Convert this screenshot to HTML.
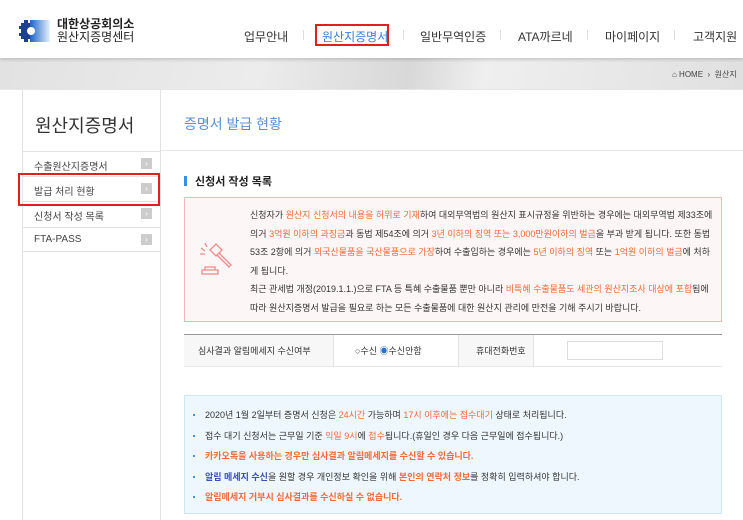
<!DOCTYPE html>
<html><head><meta charset="utf-8"><style>
*{margin:0;padding:0;box-sizing:border-box}
body{width:743px;height:520px;overflow:hidden;background:#fff;font-family:"Liberation Sans","Noto Sans CJK KR",sans-serif;color:#333;position:relative}
.a{position:absolute}
.o{color:#f26b3a}
.nav span{position:absolute;top:28px;font-size:12px;color:#333}
.sep{position:absolute;top:30px;width:1px;height:10px;background:#ddd}
.menu div{position:absolute;left:22px;width:138px;height:25px;border-top:1px solid #e2e2e2;font-size:10px;color:#444;padding:6px 0 0 12px}
.menu i{position:absolute;right:8px;top:6px;width:11px;height:11px;background:#ccc;color:#fff;font-size:8px;font-style:normal;line-height:11px;text-align:center}
.pk{font-size:9px;line-height:18.5px;color:#333}
.bl li{list-style:none;font-size:9px;line-height:20.5px;position:relative;padding-left:14px}
.bl li:before{content:"";position:absolute;left:2px;top:9px;width:2px;height:2px;background:#4a90d9}
</style></head><body>
<div class="a" style="left:0;top:0;width:743px;height:58px;background:#fff;box-shadow:0 2px 3px rgba(0,0,0,.15);z-index:2">
 <svg class="a" style="left:18px;top:18px" width="34" height="26" viewBox="0 0 34 26"><path d="M6 2h4v3h3v16h-3v3H6v-3H3v-3H1v-3h2v-4H1V8h2V5h3z" fill="#1d3f8f"/><rect x="12" y="2" width="20" height="22" fill="url(#g)"/><defs><linearGradient id="g"><stop offset="0" stop-color="#1a62c8"/><stop offset="1" stop-color="#e8f2fc"/></linearGradient></defs><circle cx="13" cy="13" r="4" fill="#fff"/></svg>
 <div class="a" style="left:57px;top:18px;font-size:12px;font-weight:bold;color:#222;line-height:13px">대한상공회의소</div>
 <div class="a" style="left:57px;top:31px;font-size:12px;color:#222;line-height:13px">원산지증명센터</div>
 <div class="nav">
  <span style="left:244px">업무안내</span><div class="sep" style="left:303px"></div>
  <span style="left:322px;color:#3a7bd5">원산지증명서</span>
  <div class="a" style="left:315px;top:24px;width:74px;height:22px;border:2px solid #e02020"></div>
  <div class="sep" style="left:403px"></div>
  <span style="left:420px">일반무역인증</span><div class="sep" style="left:500px"></div>
  <span style="left:518px">ATA까르네</span><div class="sep" style="left:587px"></div>
  <span style="left:605px">마이페이지</span><div class="sep" style="left:674px"></div>
  <span style="left:693px">고객지원</span>
 </div>
</div>
<div class="a" style="left:0;top:58px;width:743px;height:32px;background:linear-gradient(100deg,#e2e2e2 0%,#ececec 35%,#d8d8d8 55%,#efefef 65%,#e0e0e0 100%);border-bottom:1px solid #e6e6e6"></div>
<div class="a" style="left:672px;top:69px;font-size:8px;color:#444">⌂ HOME &nbsp;› &nbsp;원산지</div>
<div class="a" style="left:22px;top:90px;width:1px;height:430px;background:#e2e2e2"></div>
<div class="a" style="left:160px;top:90px;width:1px;height:430px;background:#e2e2e2"></div>
<div class="a" style="left:35px;top:112px;font-size:18px;color:#333">원산지증명서</div>
<div class="menu">
 <div style="top:151px">수출원산지증명서<i>›</i></div>
 <div style="top:176px">발급 처리 현황<i>›</i></div>
 <div style="top:201px">신청서 작성 목록<i>›</i></div>
 <div style="top:227px;border-bottom:1px solid #e2e2e2">FTA-PASS<i>›</i></div>
</div>
<div class="a" style="left:18px;top:173px;width:142px;height:33px;border:2px solid #e02020"></div>
<div class="a" style="left:184px;top:114px;font-size:14px;color:#5a8fd6">증명서 발급 현황</div>
<div class="a" style="left:161px;top:150px;width:582px;height:1px;background:#e8e8e8"></div>
<div class="a" style="left:184px;top:176px;width:3px;height:10px;background:#3a8ee6"></div>
<div class="a" style="left:195px;top:173px;font-size:11px;font-weight:bold;color:#222">신청서 작성 목록</div>
<div class="a" style="left:184px;top:197px;width:538px;height:125px;background:#fdf6f6;border:1px solid #f2b8b8"></div>
<svg class="a" style="left:198px;top:240px" width="40" height="36" viewBox="0 0 40 36" fill="none" stroke="#f08a8a" stroke-width="1.3"><path d="M4 30h16v4H4zM7 30v-3h10v3M12 10l6-6 6 6-6 6zM21 13l12 12-2 2-12-12M3 8l4 3M2 14h5M7 3l2 4"/></svg>
<div class="a pk" style="left:250px;top:206px;width:465px">신청자가 <span class="o">원산지 신청서의 내용을 허위로 기재</span>하여 대외무역법의 원산지 표시규정을 위반하는 경우에는 대외무역법 제33조에 의거 <span class="o">3억원 이하의 과징금</span>과 동법 제54조에 의거 <span class="o">3년 이하의 징역 또는 3,000만원이하의 벌금</span>을 부과 받게 됩니다. 또한 동법 53조 2항에 의거 <span class="o">외국산물품을 국산물품으로 가장</span>하여 수출입하는 경우에는 <span class="o">5년 이하의 징역</span> 또는 <span class="o">1억원 이하의 벌금</span>에 처하게 됩니다.</div>
<div class="a pk" style="left:250px;top:280px;width:465px">최근 관세법 개정(2019.1.1.)으로 FTA 등 특혜 수출물품 뿐만 아니라 <span class="o">비특혜 수출물품도 세관의 원산지조사 대상에 포함</span>됨에 따라 원산지증명서 발급을 필요로 하는 모든 수출물품에 대한 원산지 관리에 만전을 기해 주시기 바랍니다.</div>
<div class="a" style="left:184px;top:334px;width:538px;height:33px;background:#f7f7f7;border-top:1px solid #999;border-bottom:1px solid #e6e6e6"></div>
<div class="a" style="left:333px;top:335px;width:126px;height:31px;background:#fff;border-left:1px solid #e2e2e2;border-right:1px solid #e2e2e2"></div>
<div class="a" style="left:533px;top:335px;width:189px;height:31px;background:#fff;border-left:1px solid #e2e2e2"></div>
<div class="a" style="left:198px;top:344px;font-size:9px;color:#333">심사결과 알림메세지 수신여부</div>
<div class="a" style="left:355px;top:344px;font-size:9px;color:#333">○수신 <span style="color:#2a6fd6">◉</span>수신안함</div>
<div class="a" style="left:476px;top:344px;font-size:9px;color:#333">휴대전화번호</div>
<div class="a" style="left:567px;top:341px;width:96px;height:19px;border:1px solid #ddd;background:#fff"></div>
<div class="a" style="left:184px;top:395px;width:538px;height:119px;background:#eef7fd;border:1px solid #cfe6f6"></div>
<ul class="a bl" style="left:191px;top:405px">
 <li>2020년 1월 2일부터 증명서 신청은 <span class="o">24시간</span> 가능하며 <span class="o">17시 이후에는 접수대기</span> 상태로 처리됩니다.</li>
 <li>접수 대기 신청서는 근무일 기준 <span class="o">익일 9시</span>에 <span class="o">접수</span>됩니다.(휴일인 경우 다음 근무일에 접수됩니다.)</li>
 <li class="o" style="font-weight:bold">카카오톡을 사용하는 경우만 심사결과 알림메세지를 수신할 수 있습니다.</li>
 <li><span style="color:#3b4fc4;font-weight:bold">알림 메세지 수신</span>을 원할 경우 개인정보 확인을 위해 <span class="o" style="font-weight:bold">본인의 연락처 정보</span>를 정확히 입력하셔야 합니다.</li>
 <li class="o" style="font-weight:bold">알림메세지 거부시 심사결과를 수신하실 수 없습니다.</li>
</ul>
</body></html>
